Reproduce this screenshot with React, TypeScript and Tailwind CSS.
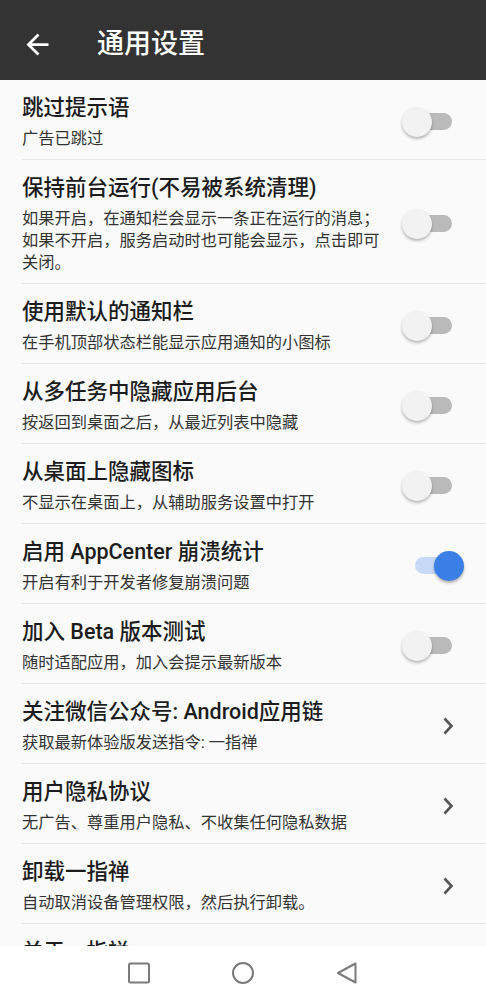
import React from "react";

type Row = {
  title: string;
  desc?: string;
  kind: "off" | "on" | "link";
};

const rows: Row[] = [
  { title: "跳过提示语", desc: "广告已跳过", kind: "off" },
  {
    title: "保持前台运行(不易被系统清理)",
    desc: "如果开启，在通知栏会显示一条正在运行的消息；如果不开启，服务启动时也可能会显示，点击即可关闭。",
    kind: "off",
  },
  { title: "使用默认的通知栏", desc: "在手机顶部状态栏能显示应用通知的小图标", kind: "off" },
  { title: "从多任务中隐藏应用后台", desc: "按返回到桌面之后，从最近列表中隐藏", kind: "off" },
  { title: "从桌面上隐藏图标", desc: "不显示在桌面上，从辅助服务设置中打开", kind: "off" },
  { title: "启用 AppCenter 崩溃统计", desc: "开启有利于开发者修复崩溃问题", kind: "on" },
  { title: "加入 Beta 版本测试", desc: "随时适配应用，加入会提示最新版本", kind: "off" },
  { title: "关注微信公众号: Android应用链", desc: "获取最新体验版发送指令: 一指禅", kind: "link" },
  { title: "用户隐私协议", desc: "无广告、尊重用户隐私、不收集任何隐私数据", kind: "link" },
  { title: "卸载一指禅", desc: "自动取消设备管理权限，然后执行卸载。", kind: "link" },
  { title: "关于一指禅", kind: "link" },
];

function Toggle({ on }: { on: boolean }) {
  return (
    <div className="relative h-[32px] w-[62px]">
      <div
        className={
          on
            ? "absolute left-[13px] top-[7px] h-[17px] w-[44px] rounded-full bg-[#c6d9f6]"
            : "absolute left-[6px] top-[7px] h-[17px] w-[44px] rounded-full bg-[#bababa]"
        }
      />
      <div
        className={
          on
            ? "absolute left-[32px] top-[1px] h-[30px] w-[30px] rounded-full bg-[#3a7fe6] shadow-[0_2px_3px_rgba(0,0,0,0.3)]"
            : "absolute left-0 top-[1px] h-[30px] w-[30px] rounded-full bg-[#f2f2f2] shadow-[0_2px_3px_rgba(0,0,0,0.28)]"
        }
      />
    </div>
  );
}

function Chevron() {
  return (
    <svg width="12" height="20" viewBox="0 0 12 20" className="mr-[10px]">
      <path d="M2.5 2.5 L9.5 10 L2.5 17.5" fill="none" stroke="#555" strokeWidth="2.6" />
    </svg>
  );
}

export default function App() {
  return (
    <div
      className="flex h-[1000px] w-[486px] flex-col overflow-hidden bg-[#fafafa]"
      style={{ fontFamily: 'Roboto, "Noto Sans CJK SC", sans-serif' }}
    >
      <header className="flex h-[80px] shrink-0 items-center bg-[#333333] pl-[21px] pt-[8px]">
        <svg width="33" height="33" viewBox="0 0 24 24">
          <path
            fill="#fff"
            d="M20 11H7.83l5.59-5.59L12 4l-8 8 8 8 1.41-1.41L7.83 13H20v-2z"
          />
        </svg>
        <h1 className="ml-[43px] text-[27px] font-medium leading-none text-white">通用设置</h1>
      </header>

      <main className="min-h-0 flex-1 overflow-hidden">
        {rows.map((r) => (
          <div key={r.title} className="pl-[22px]">
            <div className="flex min-h-[79px] items-center pb-[9px] pr-[22px] pt-[14px]">
              <div className="min-w-0 flex-1 self-start">
                <p className="text-[21.5px] font-medium leading-[28px] text-[#1c1c1c]">{r.title}</p>
                {r.desc && (
                  <p className="mt-[6px] text-[16.25px] leading-[22px] text-[#333333]">{r.desc}</p>
                )}
              </div>
              <div className="flex w-[84px] shrink-0 items-center justify-end">
                {r.kind === "link" ? <Chevron /> : <Toggle on={r.kind === "on"} />}
              </div>
            </div>
            <div className="h-px bg-[#e6e6e6]" />
          </div>
        ))}
      </main>

      <nav className="flex h-[54px] shrink-0 items-center justify-center gap-[82px] bg-white">
        <svg width="22" height="22" viewBox="0 0 22 22">
          <rect x="1" y="1.5" width="20" height="19" rx="1.5" fill="none" stroke="#7a7a7a" strokeWidth="2" />
        </svg>
        <svg width="22" height="22" viewBox="0 0 22 22">
          <circle cx="11" cy="11" r="10" fill="none" stroke="#7a7a7a" strokeWidth="2" />
        </svg>
        <svg width="22" height="22" viewBox="0 0 22 22">
          <path d="M19.5 1.5 L2 11 L19.5 20.5 Z" fill="none" stroke="#7a7a7a" strokeWidth="2" strokeLinejoin="round" />
        </svg>
      </nav>
    </div>
  );
}
